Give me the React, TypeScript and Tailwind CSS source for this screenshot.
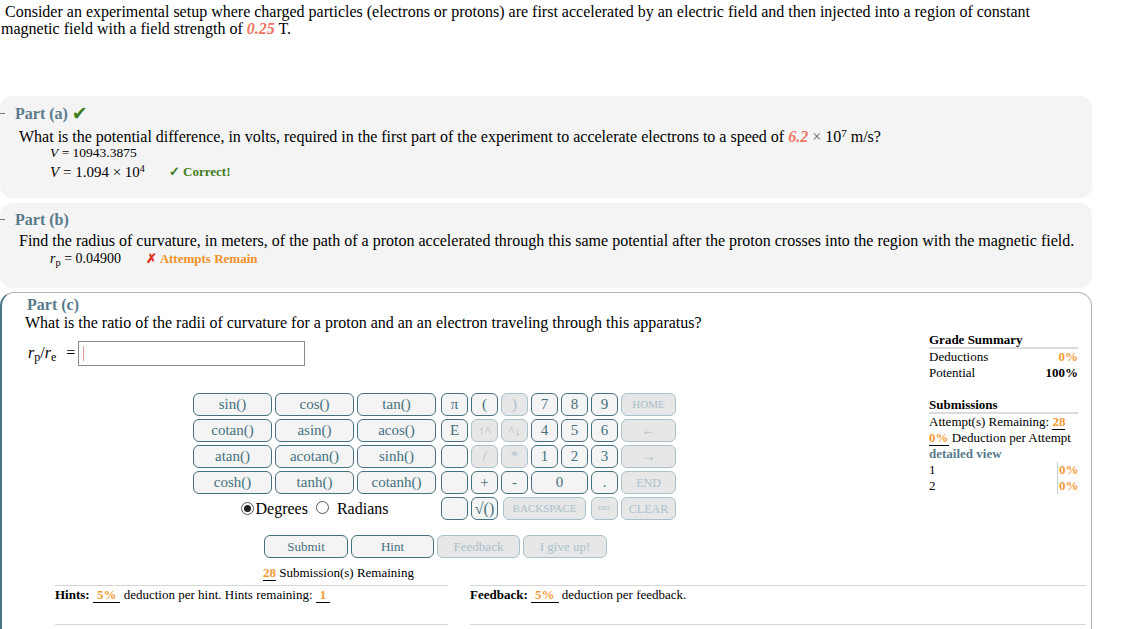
import React from "react";

const ORANGE = "text-[#f39a35]";

const Btn = ({
  children,
  disabled = false,
  className = "",
}: {
  children?: React.ReactNode;
  disabled?: boolean;
  className?: string;
}) => (
  <div
    className={`h-[23px] rounded-[6px] border-[1.5px] flex items-center justify-center leading-none ${
      disabled
        ? "border-[#a9c1cb] bg-[#e7e7e7] text-[#a9c1cb]"
        : "border-[#45707f] bg-[#f4f4f4] text-[#45707f]"
    } ${className}`}
  >
    {children}
  </div>
);

const Radio = ({ checked }: { checked?: boolean }) => (
  <span className="inline-flex w-[13px] h-[13px] rounded-full border border-[#555] bg-white items-center justify-center">
    {checked && <span className="w-[7px] h-[7px] rounded-full bg-[#222]" />}
  </span>
);

export default function App() {
  const funcs = [
    "sin()", "cos()", "tan()",
    "cotan()", "asin()", "acos()",
    "atan()", "acotan()", "sinh()",
    "cosh()", "tanh()", "cotanh()",
  ];
  return (
    <div className="w-[1146px] h-[629px] overflow-hidden bg-white text-black font-['Liberation_Serif',serif]">
      {/* intro */}
      <div className="pl-[1px] pt-[3px] text-[16px] leading-[17px] whitespace-nowrap">
        <div className="ml-[4px]">
          Consider an experimental setup where charged particles (electrons or protons) are first accelerated by an electric field and then injected into a region of constant
        </div>
        <div>
          magnetic field with a field strength of{" "}
          <span className="italic font-bold text-[#f07560]">0.25</span> T.
        </div>
      </div>

      <div className="w-[1092px] mt-[59px]">
        {/* Part (a) */}
        <div className="rounded-[12px] bg-[#f4f4f4] h-[102px] pt-[9px]">
          <div className="flex items-center h-[17px]">
            <span className="w-[5px] h-px bg-[#777]" />
            <span className="ml-[10px] text-[16px] font-bold text-[#5a7b8b]">Part (a)</span>
            <span className="ml-[4px] text-[19px] leading-none font-bold text-[#3f7d1c] font-['DejaVu_Sans',sans-serif]">✔</span>
          </div>
          <div className="ml-[19px] mt-[6px] text-[16px] leading-[17px] whitespace-nowrap">
            What is the potential difference, in volts, required in the first part of the experiment to accelerate electrons to a speed of{" "}
            <span className="italic font-bold text-[#f07560]">6.2</span>{" "}
            <span className="text-[#666]">×</span> 10<sup className="text-[11px]">7</sup> m/s?
          </div>
          <div className="ml-[50px] text-[13.5px] leading-[15px] whitespace-nowrap">
            <span className="italic">V</span> = 10943.3875
          </div>
          <div className="ml-[50px] mt-[4px] flex items-center text-[15px] leading-[16px] whitespace-nowrap">
            <span>
              <span className="italic">V</span> = 1.094 × 10<sup className="text-[10px]">4</sup>
            </span>
            <span className="ml-[24px] text-[13px] font-bold text-[#3f7d1c]">✓ Correct!</span>
          </div>
        </div>

        {/* Part (b) */}
        <div className="mt-[5px] rounded-[12px] bg-[#f4f4f4] h-[85px] pt-[8px]">
          <div className="flex items-center h-[17px]">
            <span className="w-[5px] h-px bg-[#777]" />
            <span className="ml-[10px] text-[16px] font-bold text-[#5a7b8b]">Part (b)</span>
          </div>
          <div className="ml-[19px] mt-[4px] text-[16px] leading-[17px] whitespace-nowrap">
            Find the radius of curvature, in meters, of the path of a proton accelerated through this same potential after the proton crosses into the region with the magnetic field.
          </div>
          <div className="ml-[50px] mt-[1px] flex items-center text-[14px] leading-[17px] whitespace-nowrap">
            <span>
              <span className="italic">r</span>
              <sub>p</sub> = 0.04900
            </span>
            <span className="ml-[25px] text-[13px] font-bold text-[#f0922b]">
              <span className="text-[#e0341f]">✗</span> Attempts Remain
            </span>
          </div>
        </div>

        {/* Part (c) */}
        <div className="mt-[4px] rounded-[14px] border border-[#b5b5b5] border-l-[2px] border-l-[#4a7384] h-[360px]">
          <div className="ml-[25px] pt-[3px] text-[16px] leading-[17px] font-bold text-[#5a7b8b]">Part (c)</div>
          <div className="ml-[23px] mt-[1px] text-[16px] leading-[17px] whitespace-nowrap">
            What is the ratio of the radii of curvature for a proton and an an electron traveling through this apparatus?
          </div>

          <div className="flex">
            <div className="flex-1">
              {/* input */}
              <div className="ml-[26px] mt-[10px] flex items-center h-[24px]">
                <span className="text-[16px] whitespace-nowrap flex items-center">
                  <span>
                    <span className="italic">r</span>
                    <sub>p</sub>/<span className="italic">r</span>
                    <sub>e</sub>
                  </span>
                  <span className="ml-[10px]">=</span>
                </span>
                <div className="ml-[3px] w-[227px] h-[25px] border border-[#8a8a8a] bg-white flex items-center pl-[4px]">
                  <span className="w-px h-[15px] bg-[#e79a9a]" />
                </div>
              </div>

              {/* keypad */}
              <div className="ml-[191px] mt-[28px] flex">
                <div className="w-[243px]">
                  <div className="grid grid-cols-[79px_79px_79px] gap-[3px]">
                    {funcs.map((f) => (
                      <Btn key={f} className="text-[15px]">{f}</Btn>
                    ))}
                  </div>
                  <div className="mt-[3px] h-[23px] flex items-center justify-center text-[16px] leading-none">
                    <Radio checked />
                    <span className="ml-[2px]">Degrees</span>
                    <span className="ml-[8px]"><Radio /></span>
                    <span className="ml-[8px]">Radians</span>
                  </div>
                </div>
                <div className="ml-[5px] grid grid-cols-[27px_27px_27px_27px_27px_27px_55px] grid-rows-[23px_23px_23px_23px_23px] gap-[3px] text-[15px]">
                  <Btn>π</Btn>
                  <Btn>(</Btn>
                  <Btn disabled>)</Btn>
                  <Btn>7</Btn>
                  <Btn>8</Btn>
                  <Btn>9</Btn>
                  <Btn disabled className="text-[11px]">HOME</Btn>

                  <Btn>E</Btn>
                  <Btn disabled className="text-[13px]">↑^</Btn>
                  <Btn disabled className="text-[13px]">^↓</Btn>
                  <Btn>4</Btn>
                  <Btn>5</Btn>
                  <Btn>6</Btn>
                  <Btn disabled>←</Btn>

                  <Btn />
                  <Btn disabled>/</Btn>
                  <Btn disabled>*</Btn>
                  <Btn>1</Btn>
                  <Btn>2</Btn>
                  <Btn>3</Btn>
                  <Btn disabled>→</Btn>

                  <Btn />
                  <Btn>+</Btn>
                  <Btn>-</Btn>
                  <Btn className="col-span-2">0</Btn>
                  <Btn>.</Btn>
                  <Btn disabled className="text-[12px]">END</Btn>

                  <Btn />
                  <Btn className="text-[16px]">√()</Btn>
                  <Btn disabled className="col-span-3 mx-[2px] text-[11px]">BACKSPACE</Btn>
                  <Btn disabled className="text-[7px]">DEL</Btn>
                  <Btn disabled className="text-[12px]">CLEAR</Btn>
                </div>
              </div>

              {/* submit row */}
              <div className="ml-[262px] mt-[15px] flex gap-[3px] text-[13px]">
                <Btn className="w-[84px]">Submit</Btn>
                <Btn className="w-[83px]">Hint</Btn>
                <Btn disabled className="w-[83px]">Feedback</Btn>
                <Btn disabled className="w-[84px]">I give up!</Btn>
              </div>
              <div className="ml-[261px] mt-[7px] text-[13px] leading-[16px] whitespace-nowrap">
                <span className={`font-bold ${ORANGE} border-b border-black`}>28</span> Submission(s) Remaining
              </div>
            </div>

            {/* grade summary */}
            <div className="w-[149px] mr-[13px] mt-[1px] text-[13px] leading-[16px]">
              <div className="font-bold border-b-2 border-[#dcdcdc] leading-[15px]">Grade Summary</div>
              <div className="flex justify-between">
                <span>Deductions</span>
                <span className={`font-bold ${ORANGE}`}>0%</span>
              </div>
              <div className="flex justify-between">
                <span>Potential</span>
                <span className="font-bold">100%</span>
              </div>
              <div className="mt-[16px] font-bold border-b-2 border-[#dcdcdc] leading-[15px]">Submissions</div>
              <div className="whitespace-nowrap">
                Attempt(s) Remaining:{" "}
                <span className={`font-bold ${ORANGE} border-b border-black`}>28</span>
              </div>
              <div className="whitespace-nowrap">
                <span className={`font-bold ${ORANGE} border-b border-black`}>0%</span> Deduction per Attempt
              </div>
              <div className="font-bold text-[#5a7b8b]">detailed view</div>
              <div className="flex justify-between">
                <span>1</span>
                <span className={`font-bold ${ORANGE} border-l border-[#ccc] pl-[1px] w-[21px]`}>0%</span>
              </div>
              <div className="flex justify-between">
                <span>2</span>
                <span className={`font-bold ${ORANGE} border-l border-[#ccc] pl-[1px] w-[21px]`}>0%</span>
              </div>
            </div>
          </div>

          {/* hints / feedback */}
          <div className="mt-[4px] ml-[53px] mr-[5px] flex text-[13px] leading-[16px]">
            <div className="w-[393px] h-[40px] border-t border-b border-[#d6d6d6] pt-[1px] whitespace-nowrap">
              <b>Hints:</b>{" "}
              <span className={`inline-block px-[4px] font-bold ${ORANGE} border-b border-black leading-[14px]`}>5%</span>{" "}
              deduction per hint. Hints remaining:{" "}
              <span className={`inline-block px-[4px] font-bold ${ORANGE} border-b border-black leading-[14px]`}>1</span>
            </div>
            <div className="ml-[22px] flex-1 h-[40px] border-t border-b border-[#d6d6d6] pt-[1px] whitespace-nowrap">
              <b>Feedback:</b>{" "}
              <span className={`inline-block px-[4px] font-bold ${ORANGE} border-b border-black leading-[14px]`}>5%</span>{" "}
              deduction per feedback.
            </div>
          </div>
        </div>
      </div>
    </div>
  );
}
